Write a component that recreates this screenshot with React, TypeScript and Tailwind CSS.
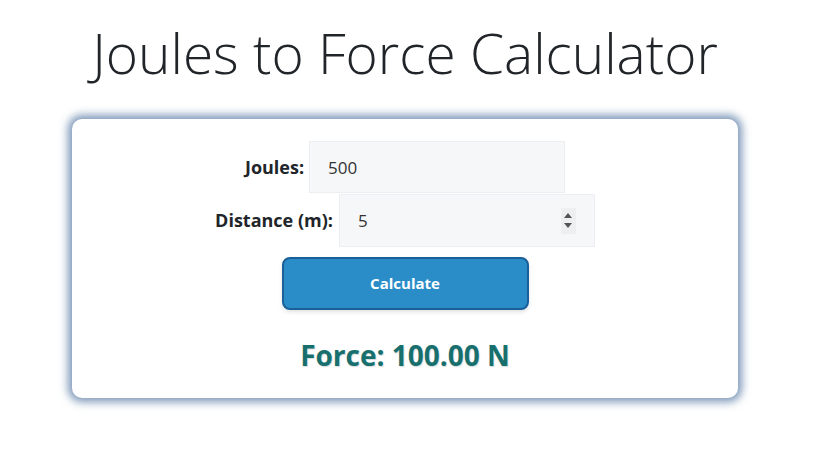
export default function App() {
  return (
    <div className="min-h-screen w-[810px] bg-white font-['Open_Sans',sans-serif] text-[#212529]">
      <h1 className="pt-[18px] text-center text-[55px] font-light leading-[70px] text-[#212529]">
        Joules to Force Calculator
      </h1>

      <div className="ml-[72px] mt-[31px] h-[279px] w-[666px] rounded-[10px] bg-white pt-[22px] shadow-[0_0_9px_4px_rgba(70,108,155,0.7)]">
        <div className="flex items-center justify-center">
          <label className="mr-[5px] text-[18px] font-bold">Joules:</label>
          <input
            defaultValue="500"
            className="h-[52px] w-[256px] border border-[#eceef1] bg-[#f6f7f9] pl-[18px] text-[17px] text-[#333] outline-none"
          />
        </div>
        <div className="mt-px flex items-center justify-center">
          <label className="mr-[6px] text-[18px] font-bold">Distance (m):</label>
          <div className="flex h-[53px] w-[256px] items-center border border-[#eceef1] bg-[#f6f7f9] pl-[18px] pr-[18px]">
            <input
              defaultValue="5"
              className="w-full bg-transparent text-[17px] text-[#333] outline-none"
            />
            <div className="flex h-[26px] w-[16px] flex-col items-center justify-center gap-[5px] bg-[#eeeff1]">
              <svg width="8" height="5" viewBox="0 0 8 5">
                <path d="M4 0L8 5H0z" fill="#555" />
              </svg>
              <svg width="8" height="5" viewBox="0 0 8 5">
                <path d="M0 0H8L4 5z" fill="#555" />
              </svg>
            </div>
          </div>
        </div>
        <div className="mt-[10px] flex justify-center">
          <button className="h-[53px] w-[247px] rounded-[8px] border-2 border-[#1b5f9a] bg-[#2a8dc8] text-[15px] font-bold text-white shadow-[0_2px_4px_rgba(0,0,0,0.12)]">
            Calculate
          </button>
        </div>
        <p className="mt-[26px] text-center text-[28px] font-bold leading-[38px] text-[#17706e] [text-shadow:1px_1px_1px_rgba(0,0,0,0.15)]">
          Force: 100.00 N
        </p>
      </div>
    </div>
  )
}
